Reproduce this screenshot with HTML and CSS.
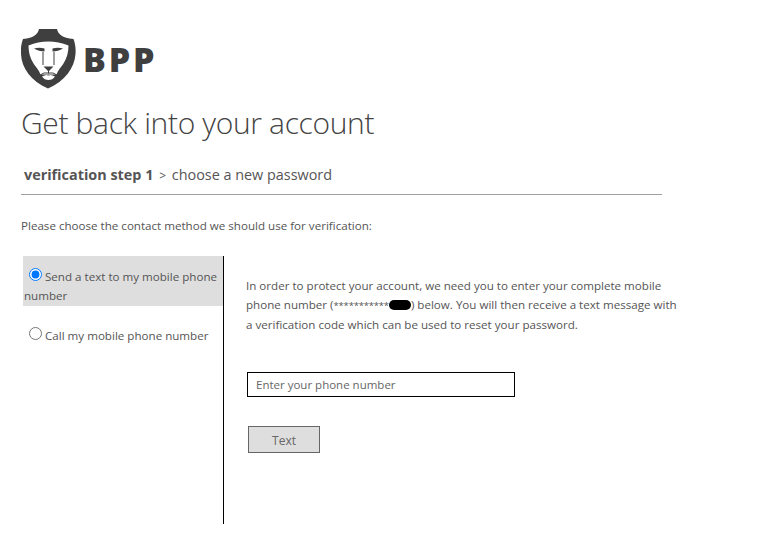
FILE: index.html
```html
<!DOCTYPE html>
<html lang="en">
<head>
<meta charset="utf-8">
<title>Get back into your account</title>
<link rel="stylesheet" href="styles.css">
</head>
<body>
<header class="brand">
  <svg class="lion" width="55" height="60" viewBox="0 0 55 60" aria-hidden="true">
    <path class="shield" d="M18 0H36C37 5 41 9 52.500 10C54 14 55 19 54.500 25C53.500 39 44 52 27 59.500C10 52 .5 39 0 25C-.5 19 .5 14 2 10C13 9 17 5 18 0Z"/>
    <path class="face" d="M7.500 16.500C14 14 20 12.500 27.500 12.500C34 12.500 41 14 47.500 16.500C47.500 23 46 29 42.500 34.500C40 38.500 37 41 35.500 45.500H19.500C18 41 15 38.500 12.500 34.500C9 29 7.500 23 7.500 16.500Z"/>
    <path class="shield" d="M13 19.500C16.500 18.500 20 18.500 23.500 19.500V22.500C20 22.500 16 21.500 13 19.500ZM42 19.500C38.500 18.500 35 18.500 31.500 19.500V22.500C35 22.500 39 21.500 42 19.500Z"/>
    <path class="line" d="M22 23V36M33 23V36"/>
    <path class="shield" d="M22.500 37.500H32.500L27.500 42.500Z"/>
    <path class="line" d="M27.500 42V44.500M19 46L23 44H32L36 46"/>
    <path class="face" d="M21 47.500L25 46L27.500 46.500L30 46L34 47.500C32.500 50 30 51 27.500 51C25 51 22.500 50 21 47.500Z"/>
  </svg>
  <span class="wordmark">BPP</span>
</header>
<h1 class="title">Get back into your account</h1>
<nav class="steps"><strong>verification step 1</strong> <span class="sep">&gt;</span> choose a new password</nav>
<hr class="rule">
<p class="prompt">Please choose the contact method we should use for verification:</p>
<main class="panel">
  <div class="methods">
    <label class="method selected"><input type="radio" name="m" checked>Send a text to my mobile phone number</label>
    <label class="method"><input type="radio" name="m">Call my mobile phone number</label>
  </div>
  <section class="detail">
    <p class="info">In order to protect your account, we need you to enter your complete mobile phone number (<span class="stars">***********</span><span class="redact"></span>) below. You will then receive a text message with a verification code which can be used to reset your password.</p>
    <input class="phone" type="text" placeholder="Enter your phone number">
    <button class="send" type="button">Text</button>
  </section>
</main>
</body>
</html>
```
FILE: styles.css
```css
* { box-sizing: border-box; }
html, body { margin: 0; height: 100%; }
body {
  background: #fff;
  color: #555;
  font-family: "Open Sans", "Noto Sans", sans-serif;
  font-size: 11.600px;
  padding: 29px 0 0 21px;
  overflow: hidden;
}
.brand { display: flex; align-items: center; gap: 7px; height: 60px; }
.shield { fill: #3f3f3f; }
.face { fill: #fff; }
.line { fill: none; stroke: #3f3f3f; stroke-width: 1; }
.wordmark { color: #3f3f3f; font: 800 34px/1 "Open Sans", sans-serif; letter-spacing: 2.800px; }
.title { margin: 13px 0 0; font-size: 30px; font-weight: 300; line-height: 42px; color: #444; letter-spacing: -.35px; }
.steps { margin: 21px 0 0 3px; font-size: 14.400px; line-height: 20px; color: #555; }
.steps strong { font-weight: 700; }
.sep { font-size: 12px; margin: 0 2px; }
.rule { width: 641px; margin: 8px 0 0; border: 0; border-top: 1px solid #a0a0a0; }
.prompt { margin: 22px 0 0; line-height: 17px; }
.panel { display: flex; margin: 22px 0 0 2px; height: 268px; }
.methods { width: 201px; border-right: 1px solid #000; }
.method { display: block; line-height: 19px; padding: 11px 0 0 1px; }
.method + .method { margin-top: 9px; padding-top: 11px; }
.method.selected { background: #dedede; height: 50px; padding-top: 11px; }
.method input { margin: 0 3px 0 5px; width: 13px; height: 13px; vertical-align: 0; }
.detail { padding: 21px 0 0 22px; width: 460px; }
.info { margin: 0; line-height: 18.900px; }
.stars { font-size: 9.500px; letter-spacing: -.2px; }
.redact { display: inline-block; width: 22px; height: 10px; border-radius: 5px; background: #000; vertical-align: -1px; }
.phone { display: block; width: 268px; height: 25px; margin: 37px 0 0 1px; padding: 1px 8px 0; border: 1px solid #000; border-radius: 0; font: 11.500px "Open Sans", sans-serif; outline: 0; }
.phone::placeholder { color: #666; opacity: 1; }
.send { display: block; width: 72px; height: 27px; margin: 29px 0 0 2px; padding: 2px 0 0; border: 1px solid #666; background: #dedede; color: #666; font: 12px "Open Sans", sans-serif; }
```
